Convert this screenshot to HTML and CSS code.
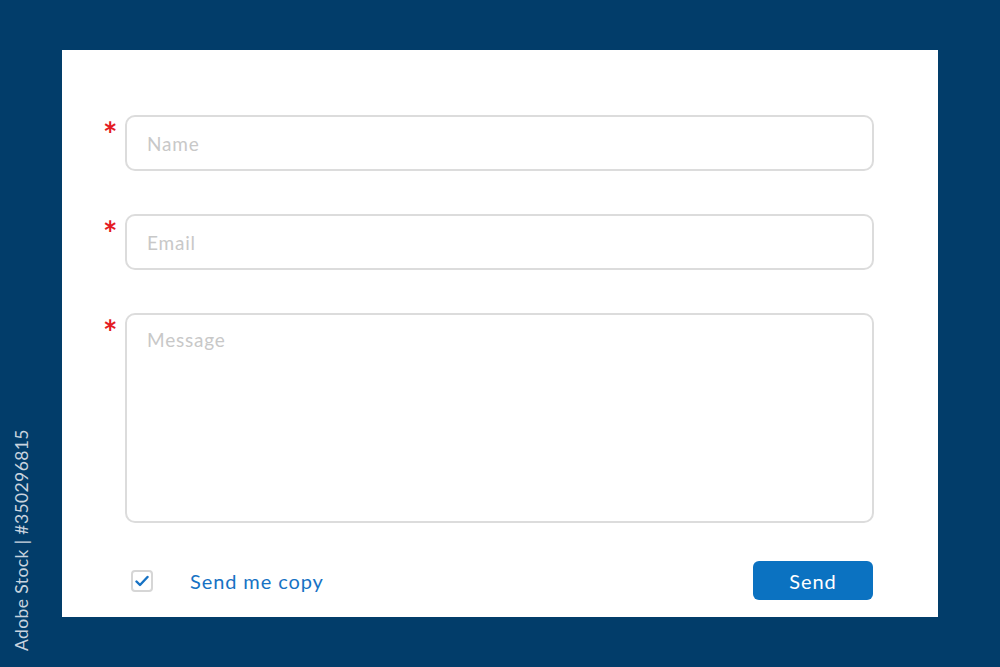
FILE: index.html
```html
<!DOCTYPE html>
<html lang="en">
	<head>
		<title>Contact form</title>
		<meta charset="utf-8">
		<link rel="stylesheet" href="styles.css">
	</head>

	<body>
		<div class="stock">Adobe Stock | #350296815</div>

		<form class="card">
			<div class="row">
				<span class="req">*</span>
				<input class="field" type="text" placeholder="Name">
			</div>
			<div class="row">
				<span class="req">*</span>
				<input class="field" type="text" placeholder="Email">
			</div>
			<div class="row">
				<span class="req">*</span>
				<textarea class="field area" placeholder="Message"></textarea>
			</div>

			<div class="foot">
				<label class="copy">
					<span class="box">
						<svg width="14" height="12" viewBox="0 0 14 12"><path d="M1.5 6.5 L5 10 L12.5 2" fill="none" stroke="#1672c4" stroke-width="2.4" stroke-linecap="round" stroke-linejoin="round"/></svg>
					</span>
					Send me copy
				</label>
				<button class="send" type="button">Send</button>
			</div>
		</form>
	</body>
</html>
```

FILE: styles.css
```css
body {
	margin: 0;
	padding: 50px 62px;
	background: #023d6a;
	font-family: Lato, "Open Sans", sans-serif;
	overflow: hidden;
}

.stock {
	position: absolute;
	left: 11px;
	top: 651px;
	transform: rotate(-90deg);
	transform-origin: 0 0;
	white-space: nowrap;
	color: #c9d4df;
	font-size: 17.5px;
	letter-spacing: 0.4px;
}

.card {
	background: #fff;
	height: 567px;
	box-sizing: border-box;
	padding: 65px 64px 0 42px;
	display: flex;
	flex-direction: column;
	gap: 43px;
}

.row {
	display: flex;
	align-items: flex-start;
}

.req {
	width: 21px;
	color: #e41b23;
	font-size: 34px;
	font-weight: 700;
	line-height: 1;
	margin-top: 2px;
	margin-left: -1px;
	margin-right: 1px;
}

.field {
	flex: 1;
	height: 56px;
	box-sizing: border-box;
	margin: 0;
	border: 2px solid #dcdcdc;
	border-radius: 10px;
	padding: 0 20px;
	font-family: inherit;
	font-size: 19px;
	letter-spacing: 0.8px;
	color: #333;
	outline: none;
}

.field::placeholder {
	color: #c8c8c8;
}

.area {
	height: 210px;
	padding-top: 13px;
	resize: none;
}

.foot {
	display: flex;
	align-items: center;
	justify-content: space-between;
	margin: -5px 1px 0 27px;
}

.copy {
	display: flex;
	align-items: center;
	gap: 37px;
	color: #1672c4;
	font-size: 20px;
	letter-spacing: 0.9px;
}

.box {
	width: 22px;
	height: 22px;
	box-sizing: border-box;
	border: 2px solid #d6d6d6;
	border-radius: 4px;
	display: flex;
	align-items: center;
	justify-content: center;
}

.send {
	width: 120px;
	height: 39px;
	border: none;
	border-radius: 6px;
	background: #0b72c1;
	color: #fff;
	font-family: inherit;
	font-size: 20px;
	letter-spacing: 0.9px;
}
```
